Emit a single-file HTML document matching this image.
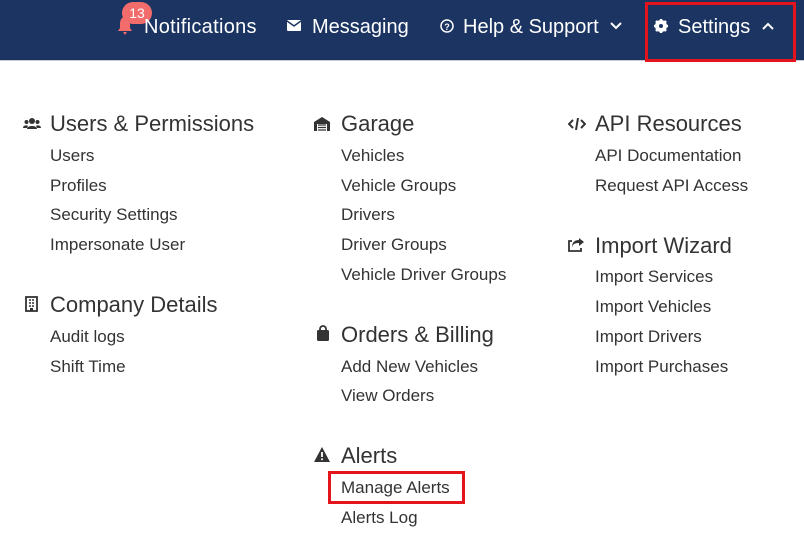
<!DOCTYPE html>
<html><head><style>
body{margin:0;width:804px;height:541px;background:#fff;font-family:"Liberation Sans",sans-serif;color:#333;position:relative;overflow:hidden}
.hdr{position:absolute;left:0;top:0;width:804px;height:60px;background:#1b3462;border-bottom:1px solid #c9ccd3}
.n{position:absolute;top:15px;color:#fff;font-size:20px;line-height:24px;white-space:nowrap}
.h{position:absolute;font-size:22px;line-height:26px;color:#333;white-space:nowrap}
.l{position:absolute;font-size:17px;line-height:20px;white-space:nowrap}
.ic{position:absolute}
.red{position:absolute;border:3px solid #e3141b;box-sizing:border-box}
</style></head><body>
<div class="hdr"></div>
<svg class="ic" style="left:117px;top:16px" width="16" height="20" viewBox="0 0 16 20"><path d="M8 1C4 1 3 5 3 8v4l-2 3h14l-2-3V8c0-3-1-7-5-7zM6 16h4l-2 3z" fill="#f26c6c"/></svg>
<div style="position:absolute;left:122px;top:2px;width:30px;height:22px;border-radius:11px;background:#f26c6c;color:#fff;font-size:14px;line-height:22px;text-align:center">13</div>
<div class="n" style="left:144px;letter-spacing:0.3px">Notifications</div>
<svg class="ic" style="left:287px;top:20px" width="14" height="11" viewBox="0 0 14 11"><rect x="0" y="0" width="14" height="11" rx="1" fill="#fff"/><path d="M0 1l7 5 7-5" stroke="#1b3462" stroke-width="1.5" fill="none"/></svg>
<div class="n" style="left:312px">Messaging</div>
<svg class="ic" style="left:440px;top:19px" width="14" height="14" viewBox="0 0 14 14"><circle cx="7" cy="7" r="6" stroke="#fff" stroke-width="1.5" fill="none"/><text x="7" y="11" font-size="9" fill="#fff" text-anchor="middle" font-family="Liberation Sans" font-weight="bold">?</text></svg>
<div class="n" style="left:463px">Help &amp; Support</div>
<svg class="ic" style="left:610px;top:22px" width="12" height="8" viewBox="0 0 12 8"><path d="M1 1l5 5 5-5" stroke="#fff" stroke-width="2" fill="none"/></svg>
<svg class="ic" style="left:654px;top:19px" width="14" height="14" viewBox="0 0 14 14"><circle cx="7" cy="7" r="4.5" fill="none" stroke="#fff" stroke-width="3"/><path d="M7 0v14M0 7h14M2 2l10 10M12 2L2 12" stroke="#fff" stroke-width="2.5"/><circle cx="7" cy="7" r="2" fill="#1b3462"/></svg>
<div class="n" style="left:678px">Settings</div>
<svg class="ic" style="left:762px;top:22px" width="12" height="8" viewBox="0 0 12 8"><path d="M1 7l5-5 5 5" stroke="#fff" stroke-width="2" fill="none"/></svg>
<div class="red" style="left:645px;top:2px;width:151px;height:60px"></div>

<svg class="ic" style="left:23px;top:117px" width="18" height="13" viewBox="0 0 18 13"><circle cx="9" cy="4" r="3" fill="#333"/><circle cx="3.5" cy="5" r="2" fill="#333"/><circle cx="14.5" cy="5" r="2" fill="#333"/><path d="M4 12c0-4 10-4 10 0zM0 11c0-3 4-3 5-2l-1 2zM18 11c0-3-4-3-5-2l1 2z" fill="#333"/></svg>
<div class="h" style="left:50px;top:111px">Users &amp; Permissions</div>
<div class="l" style="left:50px;top:146px">Users</div>
<div class="l" style="left:50px;top:176px">Profiles</div>
<div class="l" style="left:50px;top:205px">Security Settings</div>
<div class="l" style="left:50px;top:235px">Impersonate User</div>
<svg class="ic" style="left:25px;top:296px" width="13" height="16" viewBox="0 0 13 16"><rect x="1" y="1" width="11" height="14" fill="none" stroke="#333" stroke-width="1.8"/><path d="M4 4h2M7 4h2M4 7h2M7 7h2M4 10h2M7 10h2" stroke="#333" stroke-width="1.5"/><rect x="5" y="12" width="3" height="3" fill="#333"/></svg>
<div class="h" style="left:50px;top:292px">Company Details</div>
<div class="l" style="left:50px;top:327px">Audit logs</div>
<div class="l" style="left:50px;top:357px">Shift Time</div>

<svg class="ic" style="left:313px;top:117px" width="18" height="14" viewBox="0 0 18 14"><path d="M1 5L9 0l8 5v9h-3V7H4v7H1z" fill="#333"/><path d="M5 8h8M5 10.5h8M5 13h8" stroke="#333" stroke-width="1.3"/></svg>
<div class="h" style="left:341px;top:111px">Garage</div>
<div class="l" style="left:341px;top:146px">Vehicles</div>
<div class="l" style="left:341px;top:176px">Vehicle Groups</div>
<div class="l" style="left:341px;top:205px">Drivers</div>
<div class="l" style="left:341px;top:235px">Driver Groups</div>
<div class="l" style="left:341px;top:265px">Vehicle Driver Groups</div>
<svg class="ic" style="left:316px;top:325px" width="14" height="16" viewBox="0 0 14 16"><path d="M4 6V4a3 3 0 016 0v2" stroke="#333" stroke-width="1.8" fill="none"/><rect x="1" y="5" width="12" height="11" rx="1.5" fill="#333"/></svg>
<div class="h" style="left:341px;top:322px">Orders &amp; Billing</div>
<div class="l" style="left:341px;top:357px">Add New Vehicles</div>
<div class="l" style="left:341px;top:386px">View Orders</div>
<svg class="ic" style="left:314px;top:447px" width="16" height="15" viewBox="0 0 16 15"><path d="M8 0L16 15H0z" fill="#333"/><path d="M8 5v5" stroke="#fff" stroke-width="1.8"/><circle cx="8" cy="12.3" r="1" fill="#fff"/></svg>
<div class="h" style="left:341px;top:443px">Alerts</div>
<div class="l" style="left:341px;top:478px">Manage Alerts</div>
<div class="red" style="left:328px;top:471px;width:137px;height:33px"></div>
<div class="l" style="left:341px;top:508px">Alerts Log</div>

<svg class="ic" style="left:568px;top:118px" width="18" height="12" viewBox="0 0 18 12"><path d="M5 2L1 6l4 4M13 2l4 4-4 4M10 0L8 12" stroke="#333" stroke-width="2" fill="none"/></svg>
<div class="h" style="left:595px;top:111px">API Resources</div>
<div class="l" style="left:595px;top:146px">API Documentation</div>
<div class="l" style="left:595px;top:176px">Request API Access</div>
<svg class="ic" style="left:568px;top:237px" width="18" height="15" viewBox="0 0 18 15"><path d="M11 1l5 4-5 4V6c-4 0-6 1-7 4 0-5 3-7 7-7z" fill="#333"/><path d="M13 11v3H1V4h3" stroke="#333" stroke-width="1.8" fill="none"/></svg>
<div class="h" style="left:595px;top:233px">Import Wizard</div>
<div class="l" style="left:595px;top:267px">Import Services</div>
<div class="l" style="left:595px;top:297px">Import Vehicles</div>
<div class="l" style="left:595px;top:327px">Import Drivers</div>
<div class="l" style="left:595px;top:357px">Import Purchases</div>
</body></html>
